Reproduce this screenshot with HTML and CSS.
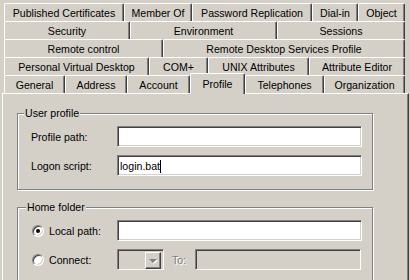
FILE: index.html
```html
<!DOCTYPE html>
<html>
<head>
<meta charset="utf-8">
<link rel="stylesheet" href="styles.css">
</head>
<body>
<div class="dialog">
  <div class="tabs">
    <div class="row r1">
      <div class="tab">Published Certificates</div>
      <div class="tab">Member Of</div>
      <div class="tab">Password Replication</div>
      <div class="tab">Dial-in</div>
      <div class="tab">Object</div>
    </div>
    <div class="row r2">
      <div class="tab">Security</div>
      <div class="tab">Environment</div>
      <div class="tab">Sessions</div>
    </div>
    <div class="row r3">
      <div class="tab">Remote control</div>
      <div class="tab">Remote Desktop Services Profile</div>
    </div>
    <div class="row r4">
      <div class="tab">Personal Virtual Desktop</div>
      <div class="tab">COM+</div>
      <div class="tab">UNIX Attributes</div>
      <div class="tab">Attribute Editor</div>
    </div>
    <div class="row r5">
      <div class="tab">General</div>
      <div class="tab">Address</div>
      <div class="tab">Account</div>
      <div class="tab sel">Profile</div>
      <div class="tab">Telephones</div>
      <div class="tab">Organization</div>
    </div>
  </div>
  <div class="panel">
    <div class="group">
      <div class="legend">User profile</div>
      <div class="field first">
        <div class="label">Profile path:</div>
        <div class="input"></div>
      </div>
      <div class="field">
        <div class="label">Logon script:</div>
        <div class="input"><span class="value">login.bat</span><span class="caret"></span></div>
      </div>
    </div>
    <div class="group g2">
      <div class="legend">Home folder</div>
      <div class="field first">
        <div class="label"><span class="radio checked"></span>Local path:</div>
        <div class="input"></div>
      </div>
      <div class="field">
        <div class="label"><span class="radio"></span>Connect:</div>
        <div class="combo"><span class="dropbtn"><span class="arrow"></span></span></div>
        <div class="to">To:</div>
        <div class="input disabled short"></div>
      </div>
    </div>
  </div>
</div>
</body>
</html>
```
FILE: styles.css
```css
html, body {
  margin: 0;
  padding: 0;
}
body {
  background: #d4d0c8;
  font-family: "Liberation Sans", Arial, sans-serif;
  font-size: 10.6px;
  color: #000;
  width: 410px;
  height: 280px;
  overflow: hidden;
}
.dialog {
  padding: 3px 0 0 2px;
}
.tabs {
  padding-left: 2px;
}
.row {
  display: grid;
  height: 18px;
  width: 401px;
}
.r1 { grid-template-columns: 120px 68px 120px 46px 47px; }
.r2 { grid-template-columns: 126px 147px 128px; }
.r3 { grid-template-columns: 159px 242px; }
.r4 { grid-template-columns: 145px 59px 101px 96px; }
.r5 { grid-template-columns: 61px 62px 63px 55px 79px 81px; }
.tab {
  box-sizing: border-box;
  background: #d4d0c8;
  border-top: 1px solid #fff;
  border-left: 1px solid #fff;
  border-right: 1px solid #404040;
  box-shadow: inset -1px 0 #808080;
  border-top-left-radius: 2px;
  border-top-right-radius: 2px;
  text-align: center;
  padding-top: 2px;
  line-height: 14px;
  white-space: nowrap;
  overflow: hidden;
}
.tab.sel {
  position: relative;
  z-index: 1;
  margin-top: -2px;
  margin-bottom: -1px;
  padding-top: 3px;
}
.panel {
  box-sizing: border-box;
  width: 407px;
  height: 187px;
  overflow: hidden;
  border-top: 1px solid #fff;
  border-left: 1px solid #fff;
  border-right: 1px solid #404040;
  box-shadow: inset -1px 0 #808080;
  padding: 19px 0 0 14px;
}
.group {
  box-sizing: border-box;
  width: 356px;
  border: 1px solid #808080;
  box-shadow: inset 1px 1px #fff, 1px 1px #fff;
  padding: 0 10px 13px 13px;
}
.g2 {
  margin-top: 17px;
  height: 120px;
}
.legend {
  width: fit-content;
  margin: -7px 0 0 -7px;
  padding: 0 1px;
  line-height: 13px;
  background: #d4d0c8;
}
.g2 .legend {
  margin-left: -5px;
}
.field {
  display: flex;
  align-items: center;
  height: 21px;
  margin-top: 8px;
}
.field.first {
  margin-top: 6px;
}
.label {
  width: 86px;
  flex: none;
  display: flex;
  align-items: center;
}
.input {
  box-sizing: border-box;
  width: 245px;
  height: 21px;
  flex: none;
  background: #fff;
  border-top: 1px solid #808080;
  border-left: 1px solid #808080;
  border-right: 1px solid #fff;
  border-bottom: 1px solid #fff;
  box-shadow: inset 1px 1px #404040, inset -1px -1px #d4d0c8;
  padding: 2px 0 0 2px;
  line-height: 15px;
  display: flex;
  align-items: center;
}
.input.disabled {
  background: #d4d0c8;
}
.input.short {
  width: 166px;
}
.caret {
  display: inline-block;
  width: 1px;
  height: 13px;
  background: #000;
}
.radio {
  position: relative;
  box-sizing: border-box;
  width: 12px;
  height: 12px;
  flex: none;
  margin: 0 5px 0 1px;
  border-radius: 50%;
  border: 1px solid;
  border-color: #808080 #fff #fff #808080;
  box-shadow: inset 1px 1px #404040, inset -1px -1px #d4d0c8;
  background: #fff;
}
.radio.checked::after {
  content: "";
  position: absolute;
  left: 3px;
  top: 3px;
  width: 4px;
  height: 4px;
  border-radius: 50%;
  background: #000;
}
.combo {
  box-sizing: border-box;
  width: 47px;
  height: 21px;
  flex: none;
  background: #d4d0c8;
  border-top: 1px solid #808080;
  border-left: 1px solid #808080;
  border-right: 1px solid #fff;
  border-bottom: 1px solid #fff;
  box-shadow: inset 1px 1px #404040, inset -1px -1px #d4d0c8;
  padding: 2px 2px 2px 0;
  display: flex;
  justify-content: flex-end;
}
.dropbtn {
  box-sizing: border-box;
  width: 16px;
  height: 17px;
  border-top: 1px solid #fff;
  border-left: 1px solid #fff;
  border-right: 1px solid #404040;
  border-bottom: 1px solid #404040;
  box-shadow: inset -1px -1px #808080;
  display: flex;
  align-items: center;
  justify-content: center;
}
.arrow {
  width: 0;
  height: 0;
  border-left: 4px solid transparent;
  border-right: 4px solid transparent;
  border-top: 4px solid #808080;
  filter: drop-shadow(1px 1px 0 #fff);
}
.to {
  margin: 0 9px 0 8px;
  color: #808080;
  text-shadow: 1px 1px 0 #fff;
}
```
